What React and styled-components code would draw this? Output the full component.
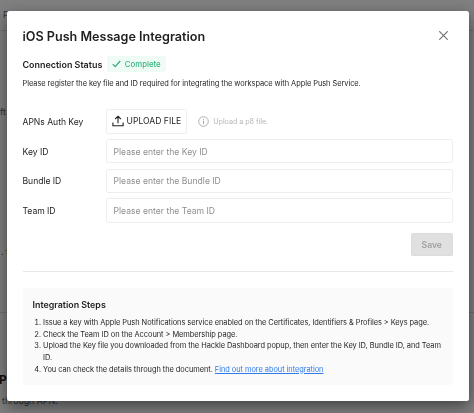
import React from 'react';
import styled, { createGlobalStyle } from 'styled-components';

const GlobalStyle = createGlobalStyle`
  * {
    box-sizing: border-box;
  }

  body {
    margin: 0;
    font-family: Inter, "Liberation Sans", sans-serif;
    color: #1f1f1f;
    background: #808080;
  }
`;

export const Page = styled.div`
  display: flex;
  flex-direction: column;
  height: 413px;
  overflow: hidden;
  background: #808080;
`;

export const PageRow = styled.div`
  flex: none;
  height: ${(props) => props.$height}px;
  padding-top: ${(props) => props.$top || 0}px;
  text-indent: ${(props) => props.$left || 0}px;
  border-bottom: ${(props) => (props.$line ? '1px solid #6f6f6f' : 'none')};
  font-size: ${(props) => props.$size || 9}px;
  font-weight: ${(props) => props.$weight || 400};
  line-height: 12px;
  color: ${(props) => (props.$weight ? '#101010' : '#303030')};
  white-space: nowrap;
`;

export const Overlay = styled.div`
  position: fixed;
  top: 0;
  left: 0;
  right: 0;
  bottom: 0;
  padding: 11px 5.5px 12.5px 7px;
`;

export const Modal = styled.div`
  height: 100%;
  padding: 17px 16px 0 15.5px;
  background: #fff;
  border-radius: 2.5px;
  box-shadow: 0 5px 15px rgba(0, 0, 0, 0.5);
`;

export const Header = styled.div`
  display: flex;
  align-items: center;
  justify-content: space-between;
  height: 17px;
`;

export const Title = styled.h2`
  margin: 0;
  font-size: 12.6px;
  font-weight: 600;
  line-height: 17px;
`;

export const CloseButton = styled.button`
  display: flex;
  padding: 0;
  margin: -2px 5px 0 0;
  border: 0;
  background: none;
`;

export const StatusRow = styled.div`
  display: flex;
  align-items: center;
  gap: 5px;
  height: 16px;
  margin-top: 11px;
`;

export const StatusTitle = styled.h3`
  margin: 0;
  font-size: 8.95px;
  font-weight: 600;
`;

export const Badge = styled.span`
  display: flex;
  align-items: center;
  gap: 3.5px;
  height: 16px;
  padding: 0 5px 0 5px;
  border-radius: 2px;
  background: #effcf6;
  color: #36b37e;
  font-size: 7.8px;
  font-weight: 500;
`;

export const Description = styled.p`
  margin: 6px 0 0;
  font-size: 7.45px;
  line-height: 12px;
  letter-spacing: -0.06px;
  color: #262626;
  white-space: nowrap;
`;

export const Form = styled.form`
  display: flex;
  flex-direction: column;
  gap: 5.2px;
  margin-top: 19px;
`;

export const Field = styled.div`
  display: flex;
  align-items: center;
  height: 24.6px;
`;

export const Label = styled.label`
  flex: none;
  width: 83px;
  padding-top: 1px;
  font-size: 8.6px;
  letter-spacing: -0.03px;
`;

export const Input = styled.input`
  flex: 1;
  min-width: 0;
  height: 100%;
  padding: 1px 7px 0;
  border: 1px solid #eeeeee;
  border-radius: 2.5px;
  outline: none;
  background: #fff;
  font-family: inherit;
  font-size: 8.6px;

  &::placeholder {
    color: #8f8f8f;
    opacity: 1;
  }
`;

export const UploadButton = styled.button`
  display: flex;
  align-items: center;
  gap: 3px;
  height: 100%;
  padding: 0 5px;
  border: 1px solid #eeeeee;
  border-radius: 2.5px;
  background: #fff;
  color: #1f1f1f;
  font-family: inherit;
  font-size: 8.6px;
  white-space: nowrap;
`;

export const Hint = styled.span`
  display: flex;
  align-items: center;
  gap: 4px;
  margin-left: 11px;
  color: #b8b8b8;
  font-size: 7.3px;
  letter-spacing: -0.1px;
`;

export const Actions = styled.div`
  display: flex;
  justify-content: flex-end;
  padding: 10px 0 15px;
  border-bottom: 1px solid #e8e8e8;
`;

export const SaveButton = styled.button`
  width: 41.5px;
  height: 23.5px;
  padding: 0;
  border: 1px solid #dcdcdc;
  border-radius: 1.5px;
  background: #e0e0e0;
  color: #a0a0a0;
  font-family: inherit;
  font-size: 8.6px;
  font-weight: 600;
`;

export const Guide = styled.section`
  height: 96.5px;
  margin-top: 16px;
  padding: 11px 10px 0;
  border-radius: 2.5px;
  background: #fafafa;
`;

export const GuideTitle = styled.h3`
  margin: 0;
  font-size: 8.9px;
  font-weight: 600;
  line-height: 12px;
`;

export const Steps = styled.ol`
  margin: 5.5px 0 0;
  padding: 0 0 0 10.5px;
  font-size: 7.45px;
  line-height: 11.65px;
  letter-spacing: -0.055px;
  color: #262626;
`;

export const Link = styled.a`
  color: #2f7bea;
  text-decoration: underline;
`;

const fields = ['Key ID', 'Bundle ID', 'Team ID'];

const CloseIcon = () => (
  <svg width="9" height="9" viewBox="0 0 9 9" fill="none" stroke="#707070" strokeWidth="1.1">
    <path d="M0.3 0.3L8.7 8.7M8.7 0.3L0.3 8.7" />
  </svg>
);

const CheckIcon = () => (
  <svg width="9" height="8" viewBox="0 0 9 8" fill="none" stroke="#36a874" strokeWidth="1.2">
    <path d="M0.8 4.2L3.2 6.7L8.2 1" />
  </svg>
);

const UploadIcon = () => (
  <svg width="12" height="12" viewBox="0 0 12 12" fill="none" stroke="#1f1f1f" strokeWidth="1.1">
    <path d="M6 8.2V1.3M3.2 4L6 1.2L8.8 4M0.9 7.5V10.7H11.1V7.5" />
  </svg>
);

const InfoIcon = () => (
  <svg width="11" height="11" viewBox="0 0 11 11" fill="none" stroke="#a8a8a8">
    <circle cx="5.5" cy="5.5" r="4.8" strokeWidth="0.9" />
    <path d="M5.5 4.8V8.1M5.5 2.8V3.8" strokeWidth="1" />
  </svg>
);

const App = () => {
  return (
    <>
      <GlobalStyle />
      <Page>
        <PageRow $height={31} $top={9} $left={3} $line>Push</PageRow>
        <PageRow $height={215} $top={75} $left={0}>ft</PageRow>
        <PageRow $height={67} $left={1} $line>. f</PageRow>
        <PageRow $height={61} />
        <PageRow $height={21} $left={-1} $size={12} $weight={700}>P</PageRow>
        <PageRow $height={18} $left={2} $size={8.8}>through APN.</PageRow>
      </Page>
      <Overlay>
        <Modal role="dialog" aria-label="iOS Push Message Integration">
          <Header>
            <Title>iOS Push Message Integration</Title>
            <CloseButton aria-label="Close"><CloseIcon /></CloseButton>
          </Header>
          <StatusRow>
            <StatusTitle>Connection Status</StatusTitle>
            <Badge><CheckIcon />Complete</Badge>
          </StatusRow>
          <Description>
            Please register the key file and ID required for integrating the workspace with Apple Push Service.
          </Description>
          <Form>
            <Field>
              <Label>APNs Auth Key</Label>
              <UploadButton type="button"><UploadIcon />UPLOAD FILE</UploadButton>
              <Hint><InfoIcon />Upload a p8 file.</Hint>
            </Field>
            {fields.map((name) => (
              <Field key={name}>
                <Label>{name}</Label>
                <Input placeholder={`Please enter the ${name}`} />
              </Field>
            ))}
          </Form>
          <Actions>
            <SaveButton disabled>Save</SaveButton>
          </Actions>
          <Guide>
            <GuideTitle>Integration Steps</GuideTitle>
            <Steps>
              <li>Issue a key with Apple Push Notifications service enabled on the Certificates, Identifiers &amp; Profiles &gt; Keys page.</li>
              <li>Check the Team ID on the Account &gt; Membership page.</li>
              <li>Upload the Key file you downloaded from the Hackle Dashboard popup, then enter the Key ID, Bundle ID, and Team ID.</li>
              <li>You can check the details through the document. <Link>Find out more about integration</Link></li>
            </Steps>
          </Guide>
        </Modal>
      </Overlay>
    </>
  );
};

export default App;
